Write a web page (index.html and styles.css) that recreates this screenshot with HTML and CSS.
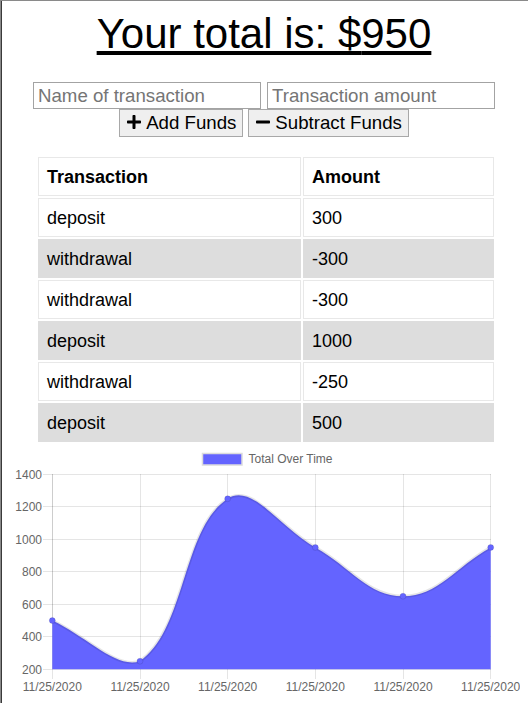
FILE: index.html
```html
<!DOCTYPE html>
<html lang="en">
<head>
<meta charset="utf-8">
<title>Budget Tracker</title>
<link rel="stylesheet" href="styles.css">
</head>
<body>
<h1 class="total">Your total is: $<span id="total">950</span></h1>

<div class="form-row">
  <input class="field" type="text" placeholder="Name of transaction">
  <input class="field" type="number" placeholder="Transaction amount">
</div>
<div class="btn-row">
  <button class="btn"><svg class="ico" viewBox="0 0 448 512" aria-hidden="true"><path d="M416 208H272V64c0-17.67-14.33-32-32-32h-32c-17.67 0-32 14.330-32 32v144H32c-17.67 0-32 14.33-32 32v32c0 17.67 14.33 32 32 32h144v144c0 17.67 14.33 32 32 32h32c17.670 0 32-14.33 32-32V304h144c17.67 0 32-14.33 32-32v-32c0-17.67-14.33-32-32-32z"/></svg>Add Funds</button>
  <button class="btn"><svg class="ico" viewBox="0 0 448 512" aria-hidden="true"><path d="M416 208H32c-17.67 0-32 14.33-32 32v32c0 17.67 14.33 32 32 32h384c17.67 0 32-14.33 32-32v-32c0-17.67-14.33-32-32-32z"/></svg>Subtract Funds</button>
</div>

<table class="tx">
  <thead>
    <tr><th class="c1">Transaction</th><th class="c2">Amount</th></tr>
  </thead>
  <tbody>
    <tr><td>deposit</td><td>300</td></tr>
    <tr><td>withdrawal</td><td>-300</td></tr>
    <tr><td>withdrawal</td><td>-300</td></tr>
    <tr><td>deposit</td><td>1000</td></tr>
    <tr><td>withdrawal</td><td>-250</td></tr>
    <tr><td>deposit</td><td>500</td></tr>
  </tbody>
</table>

<svg class="chart" width="512" height="259" viewBox="8 444 512 259" xmlns="http://www.w3.org/2000/svg">
  <g class="legend">
    <rect x="202.5" y="453.5" width="39.5" height="11.5" fill="#6464ff" stroke="#dcdcdc" stroke-width="1.5"/>
    <text x="248.5" y="463.3">Total Over Time</text>
  </g>
  <g class="grid" stroke="rgba(0,0,0,0.1)" stroke-width="1" shape-rendering="crispEdges">
    <line x1="42.5" y1="474.3" x2="490.7" y2="474.3"/>
    <line x1="42.5" y1="506.8" x2="490.7" y2="506.8"/>
    <line x1="42.5" y1="539.3" x2="490.7" y2="539.3"/>
    <line x1="42.5" y1="571.8" x2="490.7" y2="571.8"/>
    <line x1="42.5" y1="604.3" x2="490.7" y2="604.3"/>
    <line x1="42.5" y1="636.8" x2="490.7" y2="636.8"/>
    <line x1="42.5" y1="669.3" x2="490.7" y2="669.3"/>
    <line x1="52.3" y1="474.3" x2="52.3" y2="679.3"/>
    <line x1="140" y1="474.3" x2="140" y2="679.3"/>
    <line x1="227.7" y1="474.3" x2="227.7" y2="679.3"/>
    <line x1="315.3" y1="474.3" x2="315.3" y2="679.3"/>
    <line x1="403" y1="474.3" x2="403" y2="679.3"/>
    <line x1="490.7" y1="474.3" x2="490.7" y2="679.3"/>
    <line x1="52.3" y1="474.3" x2="52.3" y2="669.3"/>
  </g>
  <g class="ylabels">
    <text x="42" y="478.6">1400</text>
    <text x="42" y="511.1">1200</text>
    <text x="42" y="543.6">1000</text>
    <text x="42" y="576.1">800</text>
    <text x="42" y="608.6">600</text>
    <text x="42" y="641.1">400</text>
    <text x="42" y="673.6">200</text>
  </g>
  <g class="xlabels">
    <text x="52.3" y="690.5">11/25/2020</text>
    <text x="140" y="690.5">11/25/2020</text>
    <text x="227.7" y="690.5">11/25/2020</text>
    <text x="315.3" y="690.5">11/25/2020</text>
    <text x="403" y="690.5">11/25/2020</text>
    <text x="490.7" y="690.5">11/25/2020</text>
  </g>
  <path class="area" d="M52.3,620.6 C87.37,636.84 115.89,669.3 139.98,661.2 C186.03,629.19 182.21,528.2 227.66,498.7 C252.35,482.68 280.27,527.9 315.34,547.4 C350.41,566.9 367.95,596.2 403.02,596.2 C438.09,596.2 455.63,566.92 490.7,547.4 L490.7,669.3 L52.3,669.3 Z"/>
  <path class="line" d="M52.3,620.6 C87.37,636.84 115.89,669.3 139.98,661.2 C186.03,629.19 182.21,528.2 227.66,498.7 C252.35,482.68 280.27,527.9 315.34,547.4 C350.41,566.9 367.95,596.2 403.02,596.2 C438.09,596.2 455.63,566.92 490.7,547.4"/>
  <g class="pts">
    <circle cx="52.3" cy="620.6" r="3"/>
    <circle cx="139.98" cy="661.2" r="3"/>
    <circle cx="227.66" cy="498.7" r="3"/>
    <circle cx="315.34" cy="547.4" r="3"/>
    <circle cx="403.02" cy="596.2" r="3"/>
    <circle cx="490.7" cy="547.4" r="3"/>
  </g>
</svg>
</body>
</html>
```

FILE: styles.css
```css
html {
  min-height: 100%;
  background: #fff;
  box-shadow: inset 0 1px 0 #8a8a8a, inset 1px 0 0 #8a8a8a, inset 2px 0 0 #3a3a3a;
}

body {
  margin: 0;
  padding: 0 8px;
  font-family: "Liberation Sans", Arial, sans-serif;
  color: #000;
}

.total {
  margin: 10px 0 25px;
  font-size: 42px;
  line-height: 47px;
  font-weight: normal;
  text-align: center;
  text-decoration: underline;
}

.form-row {
  display: flex;
  justify-content: center;
  gap: 6px;
}

.field {
  box-sizing: border-box;
  width: 228px;
  height: 27px;
  margin: 0;
  padding: 1px 4px;
  border: 1px solid #a3a3a3;
  border-radius: 0;
  font-family: "Liberation Sans", Arial, sans-serif;
  font-size: 18.67px;
  color: #000;
  background: #fff;
  -moz-appearance: textfield;
}

.field::placeholder {
  color: #757575;
}

.field::-webkit-outer-spin-button,
.field::-webkit-inner-spin-button {
  -webkit-appearance: none;
  margin: 0;
}

.btn-row {
  display: flex;
  justify-content: center;
  gap: 5px;
}

.btn {
  display: inline-flex;
  align-items: center;
  box-sizing: border-box;
  height: 28px;
  margin: 0;
  padding: 0 6px 0 7px;
  border: 1px solid #a8a8a8;
  border-radius: 0;
  background: #efefef;
  font-family: "Liberation Sans", Arial, sans-serif;
  font-size: 18.67px;
  color: #000;
}

.ico {
  width: 14px;
  height: 16px;
  margin-right: 5px;
  margin-top: -3px;
  fill: #000;
}

.tx {
  width: 460px;
  margin: 18px 0 0 28px;
  border-spacing: 2px;
  table-layout: fixed;
  font-size: 18px;
}

.tx th,
.tx td {
  box-sizing: border-box;
  height: 39px;
  padding: 9px 8px 7px;
  border: 1px solid #e8e8e8;
  text-align: left;
  line-height: 21px;
}

.tx .c1 {
  width: 263px;
}

.tx th {
  font-weight: bold;
}

.tx tbody tr:nth-child(even) td {
  background: #dddddd;
  border-color: #dddddd;
}

.chart {
  display: block;
  font-family: "Liberation Sans", Arial, sans-serif;
}

.chart text {
  font-size: 12px;
  fill: #666;
}

.ylabels text {
  text-anchor: end;
}

.xlabels text {
  text-anchor: middle;
}

.area {
  fill: #6464ff;
}

.line {
  fill: none;
  stroke: rgba(0, 0, 0, 0.1);
  stroke-width: 3;
}

.pts circle {
  fill: #6464ff;
  stroke: rgba(0, 0, 0, 0.1);
  stroke-width: 1;
}
```
